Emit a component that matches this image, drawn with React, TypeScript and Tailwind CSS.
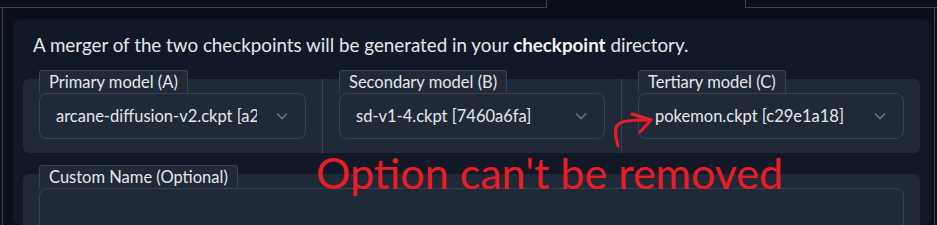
import * as React from "react";

const MODELS = [
  { label: "Primary model (A)", value: "arcane-diffusion-v2.ckpt [a2fd8b9e]" },
  { label: "Secondary model (B)", value: "sd-v1-4.ckpt [7460a6fa]" },
  { label: "Tertiary model (C)", value: "pokemon.ckpt [c29e1a18]" },
];

function Chevron() {
  return (
    <svg width="12" height="8" viewBox="0 0 12 8" className="shrink-0">
      <path d="M1 1.5 L6 6.5 L11 1.5" fill="none" stroke="#6b7280" strokeWidth="1.6" />
    </svg>
  );
}

function BlockLabel({ children }: { children: React.ReactNode }) {
  return (
    <div className="flex">
      <div className="mt-[-9px] flex h-[23px] items-center rounded-t-[3px] border border-b-0 border-[#374151] bg-[#1f2937] px-[9px] text-[16.5px] leading-none text-[#e5e7eb]">
        {children}
      </div>
    </div>
  );
}

function ModelSelect({ label, value, first }: { label: string; value: string; first?: boolean }) {
  return (
    <div className={`min-w-0 px-4 pb-[14px] ${first ? "" : "border-l border-[#374151]"}`}>
      <BlockLabel>{label}</BlockLabel>
      <div className="flex h-[46px] items-center rounded-lg border border-[#374151] pl-4 pr-[17px]">
        <div className="mr-[19px] min-w-0 flex-1 overflow-hidden whitespace-nowrap text-[16.5px] text-[#e5e7eb]">
          {value}
        </div>
        <Chevron />
      </div>
    </div>
  );
}

export default function App() {
  return (
    <div className="relative h-[225px] w-[937px] overflow-hidden bg-[#0b0f19] font-['Lato',sans-serif]">
      {/* tab strip edge */}
      <div className="flex h-[8px]">
        <div className="w-[547px] border-b border-r border-[#374151]" />
        <div className="w-[198px]" />
        <div className="flex-1 border-b border-l border-[#374151]" />
      </div>

      <div className="mx-[2px] h-[217px] border-x border-[#374151] pl-[10px] pr-[3px] pt-[11px]">
        <div className="h-full rounded-lg bg-[#111827] px-[10px] pt-[13px]">
          <p className="px-[10px] text-[18.8px] leading-[26px] text-[#e5e7eb]">
            A merger of the two checkpoints will be generated in your{" "}
            <b className="font-bold text-[#f3f4f6]">checkpoint</b> directory.
          </p>

          <div className="mt-[21px] mr-[1px] grid grid-cols-3 rounded-md bg-[#1f2937]">
            {MODELS.map((m, i) => (
              <ModelSelect key={m.label} label={m.label} value={m.value} first={i === 0} />
            ))}
          </div>

          <div className="mt-[21px] mr-[1px] rounded-md bg-[#1f2937] px-4 pb-4">
            <BlockLabel>Custom Name (Optional)</BlockLabel>
            <div className="h-[60px] rounded-lg border border-[#374151]" />
          </div>
        </div>
      </div>

      {/* red annotation */}
      <svg className="absolute left-[605px] top-[108px]" width="56" height="44" viewBox="0 0 56 44">
        <path
          d="M13 38 C11 30 9 22 12 18 C15 13 22 12 46 12"
          fill="none"
          stroke="#ec1c24"
          strokeWidth="3"
          strokeLinecap="round"
        />
        <path d="M27 6 L46 12 L35 24" fill="none" stroke="#ec1c24" strokeWidth="3" strokeLinecap="round" strokeLinejoin="round" />
      </svg>
      <div className="absolute left-[316px] top-[151px] whitespace-nowrap text-[43px] leading-none text-[#ec1c24]">
        Option can't be removed
      </div>
    </div>
  );
}
